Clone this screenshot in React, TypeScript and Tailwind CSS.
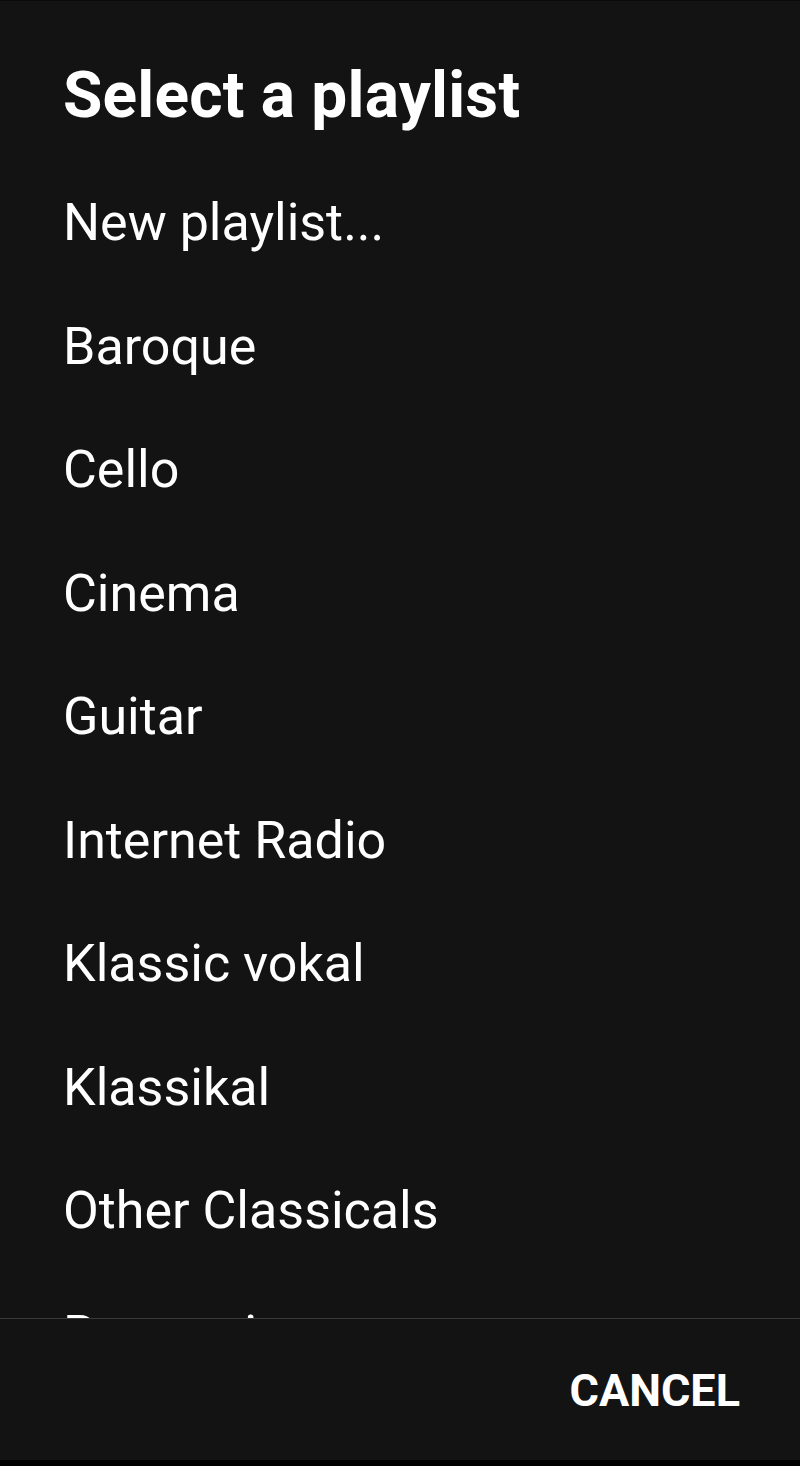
const playlists = [
  "New playlist...",
  "Baroque",
  "Cello",
  "Cinema",
  "Guitar",
  "Internet Radio",
  "Klassic vokal",
  "Klassikal",
  "Other Classicals",
  "Romantic",
];

export default function App() {
  return (
    <div
      className="w-[800px] h-[1466px] bg-[#131313] text-white flex flex-col border-t border-t-[#0a0a0a] border-b-[6px] border-b-black overflow-hidden"
      style={{ fontFamily: "Roboto, 'Noto Sans', sans-serif" }}
    >
      <h1 className="pt-[56px] pl-[63px] text-[64px] font-bold leading-[77px] tracking-[0.2px] h-[160px] shrink-0">
        Select a playlist
      </h1>

      <ul className="h-[1157px] overflow-hidden shrink-0">
        {playlists.map((name) => (
          <li
            key={name}
            className="h-[123.5px] pl-[63px] text-[52px] leading-[123.5px]"
          >
            {name}
          </li>
        ))}
      </ul>

      <div className="h-px bg-[#3a3a3a] shrink-0" />

      <div className="flex-1 flex items-center justify-end pr-[60px]">
        <button className="text-[45px] font-bold leading-none pt-[2px]">
          CANCEL
        </button>
      </div>
    </div>
  );
}
